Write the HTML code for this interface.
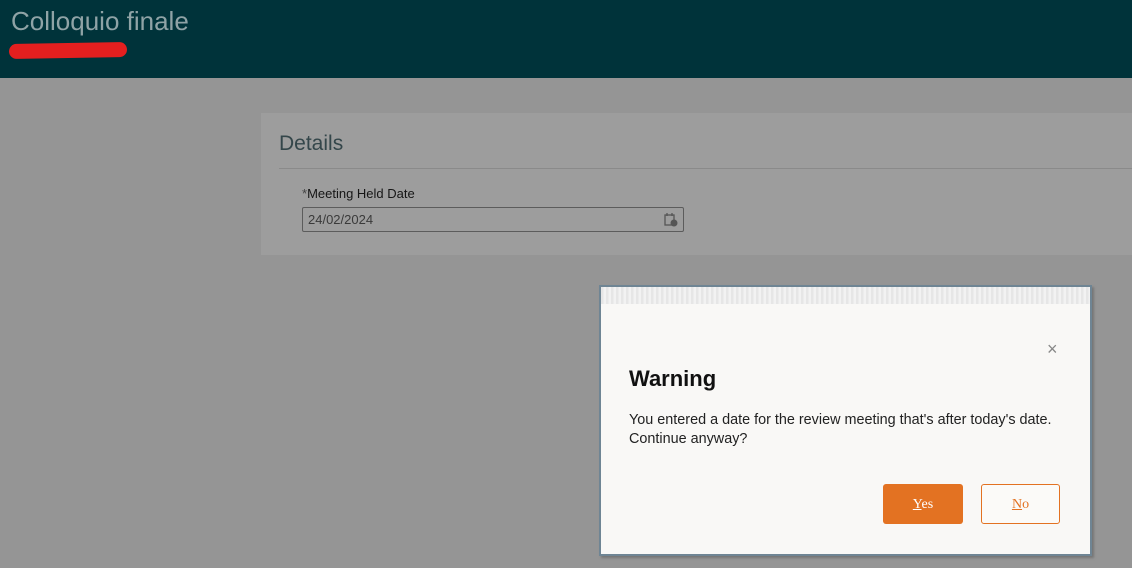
<!DOCTYPE html>
<html><head><style>
body{margin:0;width:1132px;height:568px;background:#959595;position:relative;overflow:hidden;font-family:"Liberation Sans",sans-serif}
.hdr{position:absolute;left:0;top:0;width:1132px;height:78px;background:#00333a}
.hdr h1{position:absolute;left:11px;top:6px;margin:0;font-weight:normal;font-size:26px;color:#8fa3a6;font-family:"Liberation Sans",sans-serif;letter-spacing:0px}
.red{position:absolute;left:9px;top:43px;width:118px;height:15px;background:#e41f1f;border-radius:8px;transform:rotate(-1deg)}
.panel{position:absolute;left:261px;top:113px;width:871px;height:142px;background:#9d9d9d}
.panel h2{position:absolute;left:18px;top:19px;margin:0;font-weight:normal;font-size:21px;color:#34464a;font-family:"Liberation Sans",sans-serif}
.line{position:absolute;left:18px;top:55px;right:0;height:1px;background:#8a8a8a}
.lbl{position:absolute;left:41px;top:73px;font-size:13px;color:#161616}
.inp{position:absolute;left:41px;top:94px;width:375px;height:23px;border:1px solid #5c5c5c;border-radius:2px;font-size:13px;color:#3a3a3a;line-height:23px;padding-left:5px;box-sizing:content-box}
.dlg{position:absolute;left:599px;top:285px;width:489px;height:267px;background:#f9f8f6;border:2px solid #6f8594;box-shadow:2px 2px 2px #777}
.strip{position:absolute;left:0;top:0;right:0;height:17px;background:repeating-linear-gradient(90deg,#e6e6e6 0 2px,#ececec 2px 3px,#f2f2f2 3px 5px)}
.x{position:absolute;left:446px;top:52px;font-size:18px;color:#888}
.w{position:absolute;left:28px;top:79px;font-size:22px;font-weight:bold;color:#111}
.msg{position:absolute;left:28px;top:124px;font-size:14.4px;color:#222;line-height:19px}
.b{position:absolute;top:197px;width:80px;height:40px;box-sizing:border-box;border-radius:3px;font-family:"Liberation Serif",serif;font-size:14px;text-align:center;line-height:41px}
.yes{left:282px;background:#e37222;color:#fff}
.no{left:380px;border:1px solid #e37222;color:#e37222;background:#fbfaf8;width:79px;line-height:39px}
u{text-decoration:underline}
</style></head><body>
<div class="hdr"><h1>Colloquio finale</h1><div class="red"></div></div>
<div class="panel"><h2>Details</h2><div class="line"></div>
<div class="lbl"><span style="color:#444">*</span>Meeting Held Date</div>
<div class="inp">24/02/2024<svg style="position:absolute;right:5px;top:4px" width="14" height="15" viewBox="0 0 14 15"><rect x="1" y="3" width="9" height="10" fill="none" stroke="#555" stroke-width="1.3"/><line x1="3" y1="1" x2="3" y2="4" stroke="#555" stroke-width="1.3"/><line x1="8" y1="1" x2="8" y2="4" stroke="#555" stroke-width="1.3"/><circle cx="10" cy="11" r="3.5" fill="#555"/></svg></div>
</div>
<div class="dlg"><div class="strip"></div>
<div class="x">×</div>
<div class="w">Warning</div>
<div class="msg">You entered a date for the review meeting that's after today's date.<br>Continue anyway?</div>
<div class="b yes"><u>Y</u>es</div>
<div class="b no"><u>N</u>o</div>
</div>
</body></html>
